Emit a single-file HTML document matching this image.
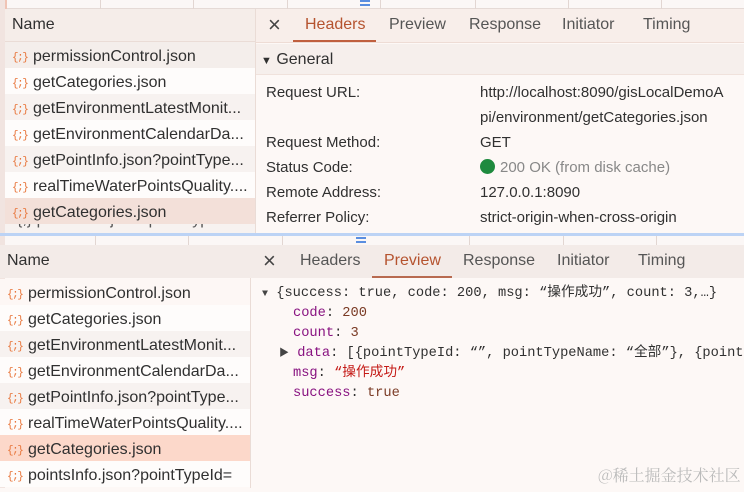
<!DOCTYPE html>
<html><head><meta charset="utf-8">
<style>
*{margin:0;padding:0;box-sizing:border-box}
body{width:744px;height:488px;overflow:hidden;background:#fdf8f6;font-family:"Liberation Sans","Noto Sans CJK SC",sans-serif;color:#303030;position:relative}
.a{position:absolute;white-space:nowrap}
.s{font-size:15px}
.ic{display:inline-block;width:21px;color:#e8753a;font-size:11px;font-family:"Liberation Mono",monospace;letter-spacing:-1.5px;vertical-align:1px}
.row{position:absolute;left:5px;height:26px;font-size:16px;line-height:30px;padding-left:7px}
.mono{font-family:"Liberation Mono","Noto Sans CJK SC",monospace;font-size:13.7px;position:absolute;white-space:nowrap;line-height:20px}
.k{color:#881280}.str{color:#c41a16}
.tab{position:absolute;font-size:15px;color:#555}
.vl{position:absolute;width:1px;background:#e2d6d2}
</style></head><body>
<div class="a" style="left:0;top:0;width:744px;height:9px;background:#fbf7f6;border-bottom:1px solid #e5dad6"></div>
<div class="vl" style="left:100px;top:0;height:9px"></div><div class="vl" style="left:193px;top:0;height:9px"></div><div class="vl" style="left:287px;top:0;height:9px"></div><div class="vl" style="left:380px;top:0;height:9px"></div><div class="vl" style="left:475px;top:0;height:9px"></div><div class="vl" style="left:568px;top:0;height:9px"></div><div class="vl" style="left:661px;top:0;height:9px"></div>
<div class="a" style="left:360px;top:0;width:10px;height:2px;background:#5a8ee0"></div><div class="a" style="left:360px;top:4px;width:10px;height:2px;background:#5a8ee0"></div>
<div class="a" style="left:0;top:0;width:5px;height:234px;background:#f1e4e0"></div>
<div class="a" style="left:5px;top:0;width:2px;height:234px;background:#f0c4b5"></div>
<div class="a" style="left:5px;top:9px;width:250px;height:33px;background:#f5ede9;border-bottom:1px solid #eadcd6"></div>
<div class="a" style="left:12px;top:16px;font-size:16px">Name</div>
<div class="row" style="top:42px;width:250px;background:#f4eeeb"><span class="ic">{;}</span>permissionControl.json</div>
<div class="row" style="top:68px;width:250px;background:#fefcfb"><span class="ic">{;}</span>getCategories.json</div>
<div class="row" style="top:94px;width:250px;background:#f7f2f0"><span class="ic">{;}</span>getEnvironmentLatestMonit...</div>
<div class="row" style="top:120px;width:250px;background:#fefcfb"><span class="ic">{;}</span>getEnvironmentCalendarDa...</div>
<div class="row" style="top:146px;width:250px;background:#f7f2f0"><span class="ic">{;}</span>getPointInfo.json?pointType...</div>
<div class="row" style="top:172px;width:250px;background:#fefcfb"><span class="ic">{;}</span>realTimeWaterPointsQuality....</div>
<div class="row" style="top:198px;width:250px;background:#f3e0d9"><span class="ic">{;}</span>getCategories.json</div>
<div class="a" style="left:5px;top:224px;width:250px;height:10px;background:#f7f2f0;overflow:hidden"><div style="font-size:16px;margin:-13px 0 0 12px;color:#555">{;} pointsInfo.json?pointTypeId=</div></div>
<div class="a" style="left:255px;top:9px;width:1px;height:225px;background:#eadcd6"></div>
<div class="a" style="left:256px;top:9px;width:488px;height:34px;background:#f8eeea;border-bottom:1px solid #eedcd5"></div>
<div class="a" style="left:268px;top:12px;font-size:22px;color:#444">×</div>
<div class="tab" style="left:305px;top:16px;color:#b5532f;font-size:16px">Headers</div>
<div class="a" style="left:293px;top:40px;width:83px;height:2px;background:#c0603f"></div>
<div class="tab" style="left:389px;top:16px;font-size:16px">Preview</div>
<div class="tab" style="left:469px;top:16px;font-size:16px">Response</div>
<div class="tab" style="left:562px;top:16px;font-size:16px">Initiator</div>
<div class="tab" style="left:643px;top:16px;font-size:16px">Timing</div>
<div class="a" style="left:256px;top:44px;width:488px;height:31px;background:#f6efec;border-bottom:1px solid #f0e2dc"></div>
<div class="a" style="left:261px;top:51px;font-size:16px"><span style="font-size:11px">▼</span> General</div>
<div class="a s" style="left:266px;top:84px">Request URL:</div>
<div class="a s" style="left:480px;top:84px">http://localhost:8090/gisLocalDemoA</div>
<div class="a s" style="left:480px;top:109px">pi/environment/getCategories.json</div>
<div class="a s" style="left:266px;top:134px">Request Method:</div><div class="a s" style="left:480px;top:134px">GET</div>
<div class="a s" style="left:266px;top:159px">Status Code:</div>
<div class="a" style="left:480px;top:159px;width:15px;height:15px;border-radius:50%;background:#1e8a3e"></div>
<div class="a s" style="left:500px;top:159px;color:#888">200 OK (from disk cache)</div>
<div class="a s" style="left:266px;top:184px">Remote Address:</div><div class="a s" style="left:480px;top:184px">127.0.0.1:8090</div>
<div class="a s" style="left:266px;top:209px">Referrer Policy:</div><div class="a s" style="left:480px;top:209px">strict-origin-when-cross-origin</div>
<div class="a" style="left:0;top:233px;width:744px;height:3px;background:#bcd3f5"></div>
<div class="a" style="left:0;top:236px;width:744px;height:9px;background:#fbf7f6"></div>
<div class="vl" style="left:95px;top:236px;height:9px"></div><div class="vl" style="left:188px;top:236px;height:9px"></div><div class="vl" style="left:282px;top:236px;height:9px"></div><div class="vl" style="left:469px;top:236px;height:9px"></div><div class="vl" style="left:563px;top:236px;height:9px"></div><div class="vl" style="left:656px;top:236px;height:9px"></div>
<div class="a" style="left:356px;top:237px;width:10px;height:2px;background:#5a8ee0"></div><div class="a" style="left:356px;top:241px;width:10px;height:2px;background:#5a8ee0"></div>
<div class="a" style="left:0;top:236px;width:5px;height:252px;background:#f1e4e0"></div>
<div class="a" style="left:0;top:245px;width:744px;height:33px;background:#f3ebe8"></div>
<div class="a" style="left:7px;top:252px;font-size:16px">Name</div>
<div class="a" style="left:263px;top:248px;font-size:22px;color:#444">×</div>
<div class="tab" style="left:300px;top:252px;font-size:16px">Headers</div>
<div class="tab" style="left:384px;top:252px;color:#b5532f;font-size:16px">Preview</div>
<div class="a" style="left:372px;top:276px;width:80px;height:2px;background:#b86a50"></div>
<div class="tab" style="left:463px;top:252px;font-size:16px">Response</div>
<div class="tab" style="left:557px;top:252px;font-size:16px">Initiator</div>
<div class="tab" style="left:638px;top:252px;font-size:16px">Timing</div>
<div class="a" style="left:250px;top:278px;width:1px;height:210px;background:#eadcd6"></div>
<div class="row" style="left:0;top:279px;width:250px;background:#fdf7f5;padding-left:7px"><span class="ic">{;}</span>permissionControl.json</div>
<div class="row" style="left:0;top:305px;width:250px;background:#fefcfb;padding-left:7px"><span class="ic">{;}</span>getCategories.json</div>
<div class="row" style="left:0;top:331px;width:250px;background:#f7f2f0;padding-left:7px"><span class="ic">{;}</span>getEnvironmentLatestMonit...</div>
<div class="row" style="left:0;top:357px;width:250px;background:#fefcfb;padding-left:7px"><span class="ic">{;}</span>getEnvironmentCalendarDa...</div>
<div class="row" style="left:0;top:383px;width:250px;background:#f7f2f0;padding-left:7px"><span class="ic">{;}</span>getPointInfo.json?pointType...</div>
<div class="row" style="left:0;top:409px;width:250px;background:#fefcfb;padding-left:7px"><span class="ic">{;}</span>realTimeWaterPointsQuality....</div>
<div class="row" style="left:0;top:435px;width:250px;background:#fcd8ca;padding-left:7px"><span class="ic">{;}</span>getCategories.json</div>
<div class="row" style="left:0;top:461px;width:250px;background:#fefcfb;padding-left:7px"><span class="ic">{;}</span>pointsInfo.json?pointTypeId=</div>
<div class="mono" style="left:262px;top:284px"><span style="font-size:10px;color:#444">▼</span> {success: true, code: 200, msg: “操作成功”, count: 3,…}</div>
<div class="mono" style="left:293px;top:304px"><span class="k">code</span>: <span style="color:#7a3a24">200</span></div>
<div class="mono" style="left:293px;top:324px"><span class="k">count</span>: <span style="color:#7a3a24">3</span></div>
<div class="mono" style="left:279px;top:344px"><span style="font-size:10px;color:#444">▶</span> <span class="k">data</span>: [{pointTypeId: “”, pointTypeName: “全部”}, {pointTy</div>
<div class="mono" style="left:293px;top:364px"><span class="k">msg</span>: <span class="str">“操作成功”</span></div>
<div class="mono" style="left:293px;top:384px"><span class="k">success</span>: <span style="color:#7a3a24">true</span></div>
<div class="a" style="left:598px;top:463px;font-size:16px;color:#bbb;font-family:'Noto Serif CJK SC','Noto Sans CJK SC',serif">@稀土掘金技术社区</div>
</body></html>
